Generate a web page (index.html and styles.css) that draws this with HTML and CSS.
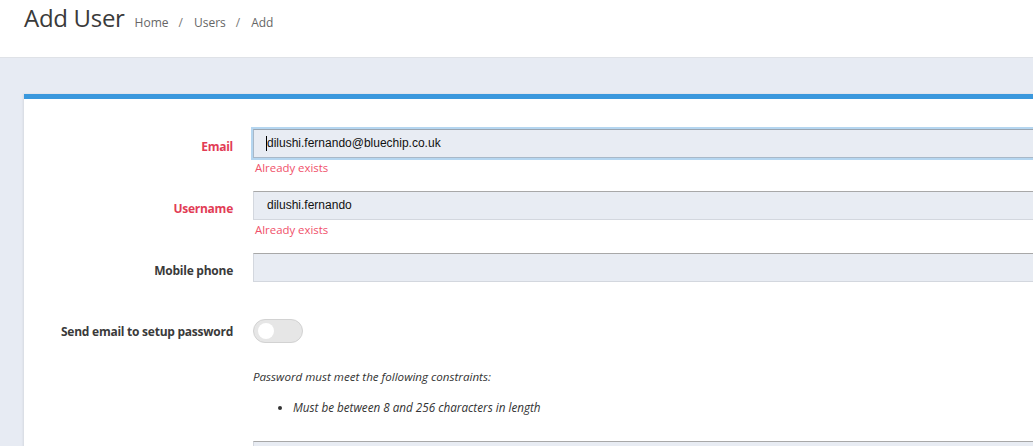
FILE: index.html
```html
<!DOCTYPE html>
<html lang="en">
<head>
<meta charset="utf-8">
<title>Add User</title>
<link rel="stylesheet" href="styles.css">
</head>
<body>
<header class="page-header">
  <h1 class="page-title">Add User</h1>
  <ol class="breadcrumb">
    <li>Home</li>
    <li class="sep">/</li>
    <li>Users</li>
    <li class="sep">/</li>
    <li>Add</li>
  </ol>
</header>
<main class="content">
  <section class="card">
    <form class="form">
      <div class="row">
        <label class="label label-error">Email</label>
        <div class="field">
          <div class="input input-focus"><span class="caret"></span>dilushi.fernando@bluechip.co.uk</div>
          <div class="error">Already exists</div>
        </div>
      </div>
      <div class="row">
        <label class="label label-error">Username</label>
        <div class="field">
          <div class="input">dilushi.fernando</div>
          <div class="error">Already exists</div>
        </div>
      </div>
      <div class="row row-mobile">
        <label class="label">Mobile phone</label>
        <div class="field">
          <div class="input"></div>
        </div>
      </div>
      <div class="row row-toggle">
        <label class="label">Send email to setup password</label>
        <div class="field">
          <span class="toggle"><span class="knob"></span></span>
        </div>
      </div>
      <div class="row row-note">
        <span class="label"></span>
        <div class="field">
          <p class="note">Password must meet the following constraints:</p>
          <ul class="constraints">
            <li>Must be between 8 and 256 characters in length</li>
          </ul>
        </div>
      </div>
      <div class="row">
        <span class="label"></span>
        <div class="field">
          <div class="input"></div>
        </div>
      </div>
    </form>
  </section>
</main>
</body>
</html>
```

FILE: styles.css
```css
* { box-sizing: border-box; }
html, body { margin: 0; padding: 0; }
body {
  font-family: "Open Sans", "Noto Sans", sans-serif;
  color: #333;
  background: #e7ebf3;
  height: 446px;
  overflow: hidden;
}
.page-header {
  height: 58px;
  background: #fff;
  border-bottom: 1px solid #dfe2e7;
  display: flex;
  align-items: baseline;
  padding: 0 0 0 24px;
}
.page-title {
  margin: 0;
  font-size: 24px;
  font-weight: 400;
  line-height: 35px;
  color: #3a3a3a;
  letter-spacing: -0.3px;
}
.breadcrumb {
  list-style: none;
  margin: 0 0 0 10px;
  padding: 0;
  display: flex;
  font-size: 12px;
  color: #666;
}
.breadcrumb .sep { margin: 0 11px 0 10px; color: #777; }
.content {
  padding: 36px 0 0 24px;
}
.card {
  background: #fff;
  border-top: 5px solid #3a98dd;
  box-shadow: -1px 0 2px rgba(0,0,0,0.08);
  height: 360px;
  padding-top: 30px;
}
.row {
  display: grid;
  grid-template-columns: 209px 1fr;
  column-gap: 20px;
  margin-bottom: 14px;
}
.label {
  text-align: right;
  font-size: 12px;
  font-weight: 700;
  letter-spacing: -0.25px;
  line-height: 20px;
  padding-top: 8px;
  color: #3a3a3a;
}
.label-error { color: #e23c55; }
.field { min-width: 0; }
.input {
  height: 29px;
  background: #e8ecf3;
  border: 1px solid #d3d7de;
  border-top-color: #a8a8a8;
  border-right: none;
  font-family: "Liberation Sans", Arial, sans-serif;
  font-size: 12px;
  color: #111;
  line-height: 27px;
  padding-left: 13px;
  white-space: nowrap;
}
.input-focus {
  box-shadow: 0 0 0 2px #b5d6f0;
  border-color: #a8b8c8;
  border-top-color: #9aa6b2;
  position: relative;
}
.caret {
  position: absolute;
  left: 12px;
  top: 6px;
  width: 1px;
  height: 15px;
  background: #000;
}
.error {
  font-size: 11.4px;
  color: #f0506a;
  line-height: 17px;
  padding-left: 2px;
  margin-top: 1px;
  margin-bottom: 1px;
}
.row-mobile { margin-bottom: 37px; }
.row-toggle { margin-bottom: 25px; }
.row-toggle .label { padding-top: 3px; }
.toggle {
  display: block;
  width: 50px;
  height: 24px;
  border-radius: 12px;
  background: #e6e6e6;
  border: 1px solid #d2d2d2;
  position: relative;
}
.knob {
  position: absolute;
  left: 4px;
  top: 3px;
  width: 16px;
  height: 16px;
  border-radius: 50%;
  background: #fff;
}
.row-note .label { padding: 0; }
.note {
  margin: 0;
  font-size: 11.6px;
  font-style: italic;
  line-height: 16px;
  color: #333;
  padding-top: 1px;
}
.constraints {
  margin: 14px 0 0 0;
  padding-left: 40px;
  font-size: 11.7px;
  font-style: italic;
  line-height: 16px;
  color: #333;
}
.row-note { margin-bottom: 26px; }
```
